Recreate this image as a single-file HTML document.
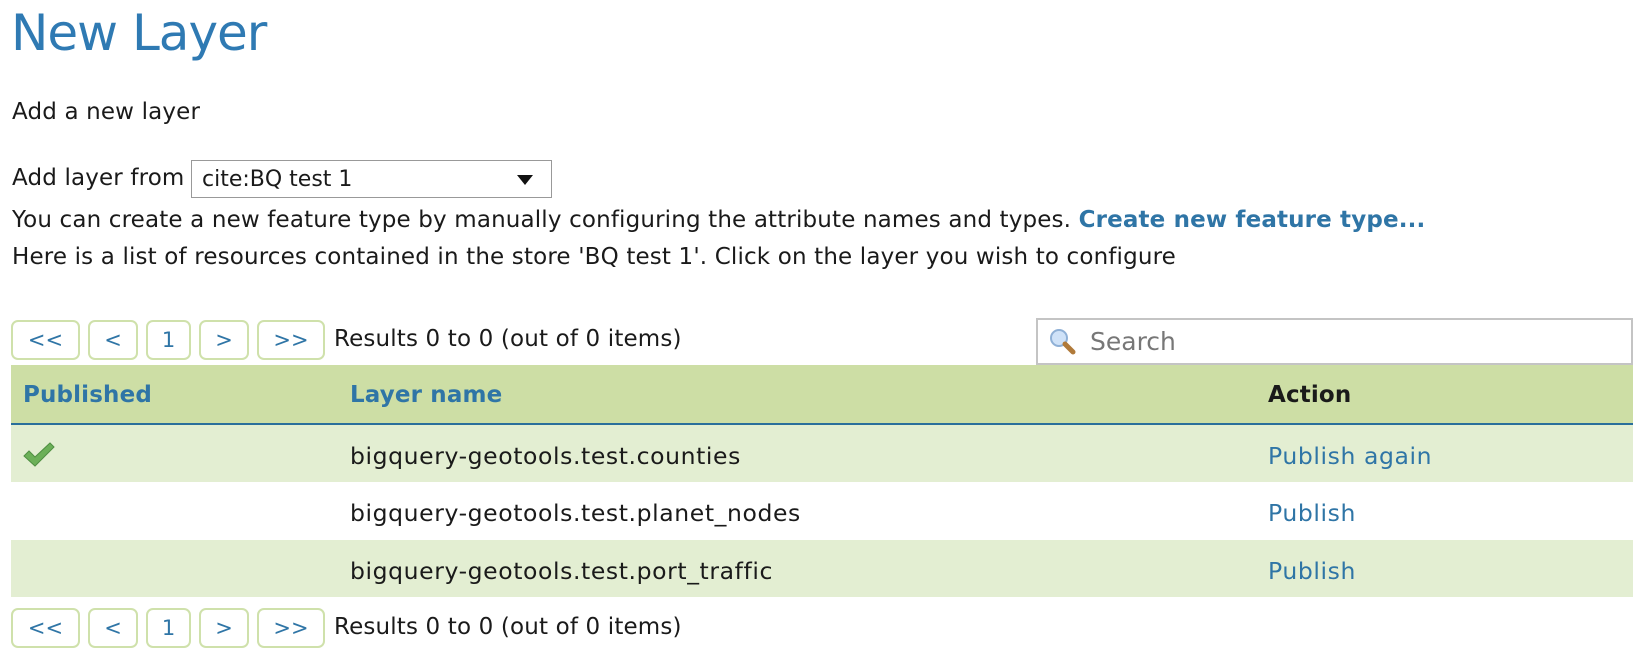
<!DOCTYPE html>
<html><head><meta charset="utf-8"><style>
body{margin:0;width:1640px;height:662px;background:#fff;font-family:"DejaVu Sans","Liberation Sans",sans-serif;color:#1a1a1a;position:relative;overflow:hidden}
.a{position:absolute;white-space:nowrap}
h1{position:absolute;left:11px;top:4px;margin:0;font-weight:normal;font-size:50px;color:#2f7ab3;font-family:"DejaVu Sans",sans-serif;letter-spacing:-1px}
.t{font-size:23px;letter-spacing:0.15px}
.sel{position:absolute;left:191px;top:160px;width:361px;height:38px;border:1px solid #999;box-sizing:border-box;font-size:22px;padding:6px 10px}
.sel:after{content:"";position:absolute;right:18px;top:14px;border-left:8px solid transparent;border-right:8px solid transparent;border-top:10px solid #111}
.nav{position:absolute;height:40px;border:2px solid #cfe1ab;border-radius:7px;box-sizing:border-box;color:#2f75a6;font-size:21px;text-align:center;line-height:36px}
.blue{color:#2f75a6}
.bar{position:absolute;left:11px;width:1622px}
.r{font-size:23.5px;letter-spacing:0.6px}
</style></head><body>
<h1>New Layer</h1>
<div class="a t" style="left:12px;top:99px">Add a new layer</div>
<div class="a t" style="left:12px;top:165px">Add layer from</div>
<div class="sel">cite:BQ test 1</div>
<div class="a t" style="left:12px;top:207px">You can create a new feature type by manually configuring the attribute names and types. <b class="blue">Create new feature type...</b></div>
<div class="a t" style="left:12px;top:244px">Here is a list of resources contained in the store 'BQ test 1'. Click on the layer you wish to configure</div>

<div class="nav" style="left:11px;top:320px;width:69px">&lt;&lt;</div>
<div class="nav" style="left:88px;top:320px;width:50px">&lt;</div>
<div class="nav" style="left:146px;top:320px;width:45px">1</div>
<div class="nav" style="left:199px;top:320px;width:50px">&gt;</div>
<div class="nav" style="left:257px;top:320px;width:68px">&gt;&gt;</div>
<div class="a t" style="left:334px;top:326px">Results 0 to 0 (out of 0 items)</div>

<div class="a" style="left:1036px;top:318px;width:597px;height:47px;border:2px solid #c4c4c4;box-sizing:border-box"></div>
<svg class="a" style="left:1048px;top:327px" width="30" height="30" viewBox="0 0 30 30"><circle cx="11" cy="11" r="8" fill="#cfe2f8" stroke="#8fb0d6" stroke-width="2"/><line x1="17" y1="17" x2="25" y2="25" stroke="#b07a3a" stroke-width="5" stroke-linecap="round"/></svg>
<div class="a" style="left:1090px;top:327px;font-size:25px;color:#777">Search</div>

<div class="bar" style="top:365px;height:58px;background:#cddea5;border-bottom:2px solid #2a6f9b"></div>
<div class="a t blue" style="left:23px;top:382px;font-weight:bold">Published</div>
<div class="a t blue" style="left:350px;top:382px;font-weight:bold">Layer name</div>
<div class="a t" style="left:1268px;top:382px;font-weight:bold">Action</div>

<div class="bar" style="top:425px;height:57px;background:#e3eed2"></div>
<div class="bar" style="top:540px;height:57px;background:#e3eed2"></div>
<svg class="a" style="left:22px;top:441px" width="34" height="28" viewBox="0 0 34 28"><path d="M2 15 L7 10 L13 16 L28 2 L32 6 L13 25 Z" fill="#6cb058" stroke="#4f8f42" stroke-width="1"/></svg>
<div class="a r" style="left:350px;top:442px">bigquery-geotools.test.counties</div>
<div class="a r blue" style="left:1268px;top:442px">Publish again</div>
<div class="a r" style="left:350px;top:499px">bigquery-geotools.test.planet_nodes</div>
<div class="a r blue" style="left:1268px;top:499px">Publish</div>
<div class="a r" style="left:350px;top:557px">bigquery-geotools.test.port_traffic</div>
<div class="a r blue" style="left:1268px;top:557px">Publish</div>

<div class="nav" style="left:11px;top:608px;width:69px">&lt;&lt;</div>
<div class="nav" style="left:88px;top:608px;width:50px">&lt;</div>
<div class="nav" style="left:146px;top:608px;width:45px">1</div>
<div class="nav" style="left:199px;top:608px;width:50px">&gt;</div>
<div class="nav" style="left:257px;top:608px;width:68px">&gt;&gt;</div>
<div class="a t" style="left:334px;top:614px">Results 0 to 0 (out of 0 items)</div>
</body></html>
